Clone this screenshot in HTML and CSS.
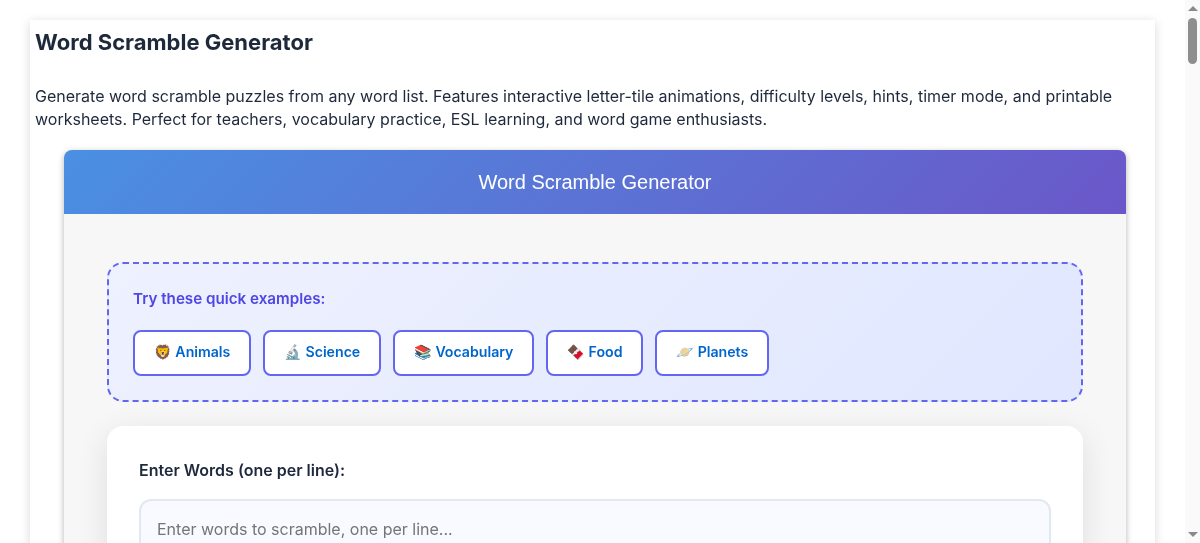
FILE: index.html
```html
<!DOCTYPE html>
<html lang="en">
<head>
<meta charset="utf-8">
<title>Word Scramble Generator</title>
<link rel="stylesheet" href="styles.css">
</head>
<body>
<main class="page">
  <h1 class="page-title">Word Scramble Generator</h1>
  <p class="page-desc">Generate word scramble puzzles from any word list. Features interactive letter-tile animations, difficulty levels, hints, timer mode, and printable worksheets. Perfect for teachers, vocabulary practice, ESL learning, and word game enthusiasts.</p>
  <section class="tool">
    <header class="tool-header">Word Scramble Generator</header>
    <div class="tool-body">
      <div class="examples">
        <div class="examples-title">Try these quick examples:</div>
        <div class="examples-row">
          <button class="chip" type="button">🦁 Animals</button>
          <button class="chip" type="button">🔬 Science</button>
          <button class="chip" type="button">📚 Vocabulary</button>
          <button class="chip" type="button">🍫 Food</button>
          <button class="chip" type="button">🪐 Planets</button>
        </div>
      </div>
      <div class="panel">
        <label class="field-label" for="words">Enter Words (one per line):</label>
        <textarea class="field-input" id="words" rows="14" placeholder="Enter words to scramble, one per line..."></textarea>
      </div>
    </div>
  </section>
</main>
<div class="scrollbar" aria-hidden="true">
  <span class="scroll-arrow-up"></span>
  <span class="scroll-thumb"></span>
  <span class="scroll-arrow-down"></span>
</div>
</body>
</html>
```
FILE: styles.css
```css
* { box-sizing: border-box; }
html { background: #fff; }
body {
  margin: 0;
  padding: 20px 45px 40px 30px;
  font-family: Inter, "Liberation Sans", sans-serif;
  color: #1e293b;
}
.page {
  background: #fff;
  padding: 0 0 40px 5px;
  box-shadow: 0 2px 10px rgba(0, 0, 0, 0.15);
  will-change: transform;
}
.page-title {
  margin: 0;
  padding-top: 8px;
  font-size: 22px;
  line-height: 28px;
  font-weight: 650;
}
.page-desc {
  margin: 29px 0 19px;
  font-size: 16px;
  line-height: 23px;
}
.tool {
  width: 1062px;
  margin: 0 auto;
  border-radius: 8px;
  background: #f7f7f7;
  box-shadow: 0 2px 6px rgba(0, 0, 0, 0.3);
  overflow: hidden;
}
.tool-header {
  height: 64px;
  display: flex;
  align-items: center;
  justify-content: center;
  color: #fff;
  font-family: "Liberation Sans", Arial, sans-serif;
  font-size: 20px;
  background: linear-gradient(135deg, #4a90e2, #6b57c9);
}
.tool-body { padding: 48px 43px 60px; }
.examples {
  height: 140px;
  padding: 24px;
  border: 2px dashed #6366f1;
  border-radius: 16px;
  background: linear-gradient(135deg, #eef1fe, #e0e7ff);
}
.examples-title {
  font-size: 15.2px;
  line-height: 22px;
  font-weight: 600;
  color: #4f46e5;
}
.examples-row {
  display: flex;
  gap: 12px;
  margin-top: 20px;
}
.chip {
  height: 46px;
  padding: 0 18.8px 2px;
  border: 2px solid #6366f1;
  border-radius: 8px;
  background: #fff;
  color: #0066cc;
  font-family: inherit;
  font-size: 14.15px;
  line-height: 20px;
  font-weight: 600;
}
.panel {
  margin-top: 24px;
  padding: 32px;
  border-radius: 16px;
  background: #fff;
  box-shadow: 0 8px 32px rgba(0, 0, 0, 0.1);
}
.field-label {
  display: block;
  font-size: 16px;
  line-height: 24px;
  font-weight: 600;
  margin-bottom: 17px;
}
.field-input {
  display: block;
  width: 100%;
  padding: 16px;
  border: 2px solid #e2e8f0;
  border-radius: 12px;
  background: #f8faff;
  font-family: inherit;
  font-size: 16px;
  line-height: 24px;
  resize: vertical;
}
.field-input::placeholder { color: #757575; }
.scrollbar {
  position: fixed;
  top: 0;
  right: 0;
  bottom: 0;
  width: 15px;
  display: flex;
  flex-direction: column;
  align-items: center;
  background: #fafafa;
}
.scroll-arrow-up {
  margin-top: 6px;
  border: 5px solid transparent;
  border-top: 0;
  border-bottom: 5px solid #8a8a8a;
}
.scroll-thumb {
  width: 9px;
  height: 46px;
  margin-top: 7px;
  border-radius: 5px;
  background: #8e8e8e;
}
.scroll-arrow-down {
  margin-top: auto;
  margin-bottom: 6px;
  border: 5px solid transparent;
  border-bottom: 0;
  border-top: 5px solid #8a8a8a;
}
```
